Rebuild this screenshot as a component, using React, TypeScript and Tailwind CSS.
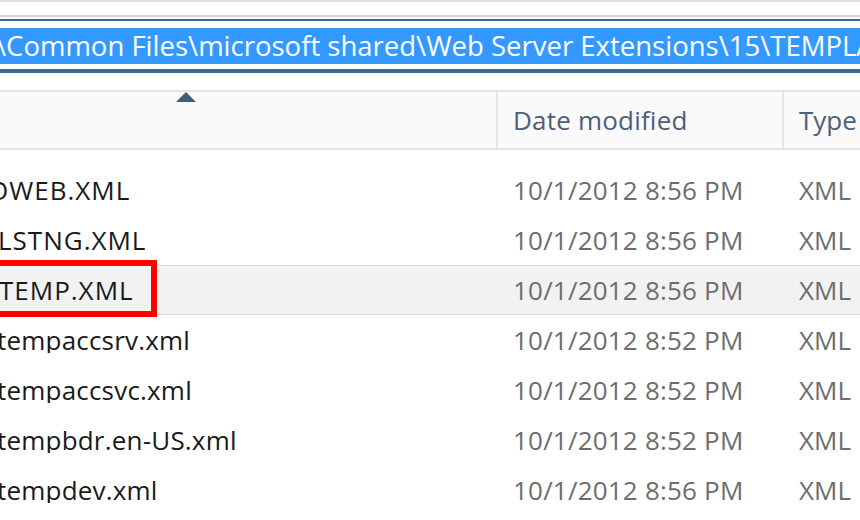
import React from "react";

const rows = [
  { name: "OWEB.XML", cls: "-ml-[12px] tracking-[1px]", date: "10/1/2012 8:56 PM" },
  { name: "LSTNG.XML", cls: "-ml-[2px] tracking-[1px]", date: "10/1/2012 8:56 PM" },
  { name: "TEMP.XML", cls: "-ml-[1px] tracking-[1px]", date: "10/1/2012 8:56 PM", hl: true },
  { name: "tempaccsrv.xml", cls: "-ml-[3px] tracking-[0.2px]", date: "10/1/2012 8:52 PM" },
  { name: "tempaccsvc.xml", cls: "-ml-[3px] tracking-[0.2px]", date: "10/1/2012 8:52 PM" },
  { name: "tempbdr.en-US.xml", cls: "-ml-[3px] tracking-[0.2px]", date: "10/1/2012 8:52 PM" },
  { name: "tempdev.xml", cls: "-ml-[3px] tracking-[0.2px]", date: "10/1/2012 8:56 PM" },
];

export default function App() {
  return (
    <div className="relative w-[860px] h-[520px] overflow-hidden bg-white font-['Open_Sans',sans-serif] text-[26px] leading-none">
      <div className="h-[2px] bg-[#e3e3e3]" />
      <div className="h-[13px]" />
      <div className="h-[2px] bg-[#d4d4d4]" />
      <div className="h-[2px]" />
      {/* address bar */}
      <div className="border-t-2 border-b-4 border-[#3f6890] pt-[7px] pb-[5px]">
        <div className="h-[36px] bg-[#3399ff] flex items-center overflow-hidden">
          <span className="-ml-[4px] whitespace-nowrap text-white text-[27.5px]">
            \Common Files\microsoft shared\Web Server Extensions\15\TEMPLATE\1033\XML
          </span>
        </div>
      </div>
      <div className="h-[17px]" />
      {/* column header */}
      <div className="flex h-[60px] border-t-2 border-b-2 border-[#e5e5e5] bg-[#fafafa] text-[#4c607a]">
        <div className="relative w-[496px] shrink-0">
          <svg className="absolute left-[176px] top-0" width="20" height="10" viewBox="0 0 20 10">
            <polygon points="0,10 10,0 20,10" fill="#435c7c" />
          </svg>
        </div>
        <div className="w-[2px] bg-[#e5e5e5] shrink-0" />
        <div className="w-[284px] shrink-0 flex items-center pl-[15px] tracking-[0.2px]">Date modified</div>
        <div className="w-[2px] bg-[#e5e5e5] shrink-0" />
        <div className="flex items-center pl-[15px] whitespace-nowrap">Type</div>
      </div>
      {/* rows */}
      <div className="pt-[15px]">
        {rows.map((r) => (
          <div
            key={r.name}
            className={
              r.hl
                ? "flex h-[50px] items-center border-y border-[#d9d9d9] bg-[#f2f2f2]"
                : "flex h-[50px] items-center border-y border-transparent"
            }
          >
            <div className="w-[498px] shrink-0 overflow-hidden">
              <span className={`block whitespace-nowrap text-[#1a1a1a] ${r.cls}`}>{r.name}</span>
            </div>
            <div className="w-[286px] shrink-0 pl-[15px] whitespace-nowrap text-[#6d6d6d] tracking-[0.2px]">{r.date}</div>
            <div className="pl-[15px] whitespace-nowrap text-[#6d6d6d]">XML</div>
          </div>
        ))}
      </div>
      {/* red annotation box */}
      <div className="absolute left-[-10px] top-[260px] w-[167px] h-[57px] border-[6px] border-[#ff0000]" />
    </div>
  );
}
